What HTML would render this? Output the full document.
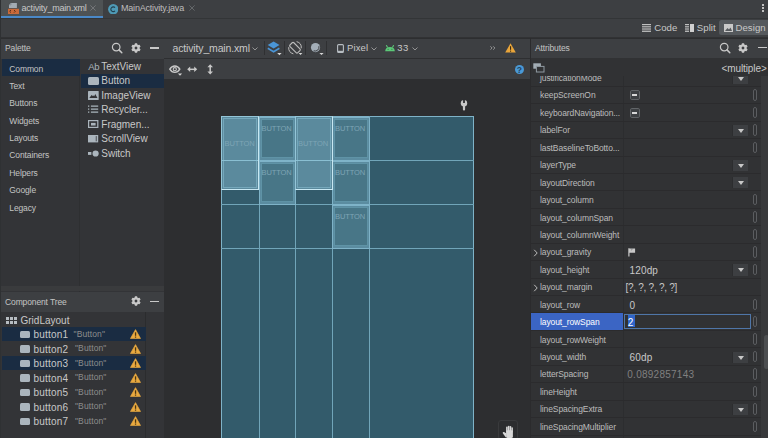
<!DOCTYPE html>
<html><head><meta charset="utf-8">
<style>
*{margin:0;padding:0;box-sizing:border-box}
html,body{width:768px;height:438px;overflow:hidden;background:#2d2e30;font-family:"Liberation Sans",sans-serif;color:#bbbbbb}
.a{position:absolute}
.t{position:absolute;white-space:nowrap;line-height:12px}
.cat{font-size:8.5px;color:#c4c4c4;letter-spacing:-0.12px}
.item{font-size:10px;color:#c8c8c8;letter-spacing:-0.02px}
.tr{font-size:10px;color:#c8c8c8;line-height:13px;letter-spacing:0.22px}
.trs{font-size:8.5px;color:#8d8d8d;line-height:11px;letter-spacing:0.1px}
.bi{position:absolute;width:10px;height:7.5px;border-radius:1.5px;background:#abb5bd}
.n{font-size:8.5px;line-height:17.44px;letter-spacing:-0.1px;padding-top:1.2px}
.v{font-size:10px;line-height:17.44px;color:#c8c8c8;letter-spacing:0.15px;padding-top:1px}
.arr{font-size:13px;line-height:16px;color:#bbbbbb}
.sep{left:0;width:231px;height:1px;background:#2b2b2d}
.dd{position:absolute;left:201.2px;width:16.6px;height:11.2px;background:#3d3f42;border-left:1px solid #2c2d2f}
.dd i{position:absolute;left:5px;top:4px;width:0;height:0;border-left:3px solid transparent;border-right:3px solid transparent;border-top:4px solid #c8c8c8}
.pk{position:absolute;left:222.5px;width:3.7px;height:11.5px;border:1px solid #5b5d60;border-radius:2px}
.cb{position:absolute;left:99px;width:10px;height:10px;border:1px solid #626568;border-radius:1.8px;background:#3d4043}
.cb i{position:absolute;left:1.2px;top:3.1px;width:5.6px;height:1.9px;background:#d8d8d8}
.hdr{font-size:8.5px;color:#c4c4c4;line-height:12px;letter-spacing:-0.12px}
.bp{position:absolute}
.btxt{position:absolute;font-size:7.5px;color:#7ea5b5;white-space:nowrap;letter-spacing:-0.1px}
</style></head><body>
<!-- tab bar -->
<div class="a" style="left:0;top:0;width:768px;height:18px;background:#3d3f42"></div>
<div class="a" style="left:0;top:0;width:102.5px;height:18px;background:#4e5254"></div>
<div class="a" style="left:1px;top:16px;width:101.5px;height:2px;background:#4a88c7"></div>
<div class="a" style="left:0;top:18px;width:768px;height:0.8px;background:#333537"></div>
<!-- tab icons -->
<svg class="a" style="left:8px;top:2.8px" width="11" height="11" viewBox="0 0 11 11"><path d="M2.8 0.1h6.1v5h-7.9v-3.2z" fill="#a3acb4"/><path d="M1.4 1.9h1.6v-1.6" stroke="#6a7077" stroke-width="0.5" fill="none"/><rect x="0" y="5.8" width="11" height="5.2" fill="#c96a3a"/><path d="M3 7l-1.3 1.3 1.3 1.3M6 7l1.3 1.3-1.3 1.3" stroke="#4a2a18" stroke-width="0.9" fill="none"/></svg>
<div class="t" style="left:21.5px;top:2.3px;font-size:9px;color:#c8c8c8;letter-spacing:-0.2px">activity_main.xml</div>
<svg class="a" style="left:90px;top:5px" width="6" height="6" viewBox="0 0 6 6"><path d="M0.4 0.4l5.2 5.2M5.6 0.4l-5.2 5.2" stroke="#7d8083" stroke-width="0.8"/></svg>
<svg class="a" style="left:107.8px;top:3.6px" width="10.5" height="10.5" viewBox="0 0 10.5 10.5"><circle cx="5.25" cy="5.25" r="5.15" fill="#4e9ab6"/><path d="M7 3.6a2.4 2.4 0 1 0 0 3.3" stroke="#22404e" stroke-width="1.1" fill="none"/></svg>
<div class="t" style="left:121px;top:2.3px;font-size:9px;color:#bdbdbd;letter-spacing:-0.2px">MainActivity.java</div>
<svg class="a" style="left:189px;top:5.2px" width="6" height="6" viewBox="0 0 6 6"><path d="M0.4 0.4l5.2 5.2M5.6 0.4l-5.2 5.2" stroke="#6f7275" stroke-width="0.8"/></svg>
<!-- kebab -->
<div class="a" style="left:762.3px;top:4.2px;width:1.9px;height:1.8px;background:#c0c0c0"></div>
<div class="a" style="left:762.3px;top:7.2px;width:1.9px;height:1.8px;background:#c0c0c0"></div>
<div class="a" style="left:762.3px;top:10.2px;width:1.9px;height:1.8px;background:#c0c0c0"></div>

<div class="a" style="left:0;top:0;width:1.4px;height:438px;background:#2f3133;z-index:5"></div>
<!-- row2 -->
<div class="a" style="left:0;top:19px;width:768px;height:18.5px;background:#3d3f42"></div>
<div class="a" style="left:0;top:37.2px;width:768px;height:0.9px;background:#313234"></div>
<svg class="a" style="left:642px;top:24px" width="9" height="8" viewBox="0 0 9 8"><path d="M0 0.5h9M0 2.3h9M0 4.1h9M0 5.9h9M0 7.6h9" stroke="#c0c0c0" stroke-width="1"/></svg>
<div class="t" style="left:654.2px;top:22px;font-size:9.6px;color:#c8c8c8;letter-spacing:0.05px">Code</div>
<svg class="a" style="left:685px;top:24px" width="9" height="8" viewBox="0 0 9 8"><path d="M0 0.5h4M0 2.3h4M0 4.1h4M0 5.9h4M0 7.6h4" stroke="#c0c0c0" stroke-width="1"/><rect x="5" y="0" width="4" height="8" fill="#d0d0d0"/></svg>
<div class="t" style="left:696.8px;top:22px;font-size:9.6px;color:#c8c8c8;letter-spacing:0.05px">Split</div>
<div class="a" style="left:719px;top:19.6px;width:52px;height:15.5px;border-radius:2.5px;background:#55595d"></div>
<svg class="a" style="left:723.5px;top:23.5px" width="9" height="8" viewBox="0 0 9 8"><rect x="0" y="0" width="9" height="8" fill="#c8c8c8"/><path d="M1 7l2.5-3 1.5 1.5 1.5-2 1.5 3.5z" fill="#55595d"/></svg>
<div class="t" style="left:735.5px;top:22px;font-size:9.6px;color:#c8c8c8;letter-spacing:0.05px">Design</div>

<!-- left panel -->
<div class="a" style="left:0;top:38.5px;width:164px;height:20.5px;background:#3d3f42"></div>
<div class="t hdr" style="left:5px;top:42px">Palette</div>
<svg class="a" style="left:111px;top:42px" width="12" height="12" viewBox="0 0 12 12"><circle cx="5.2" cy="5.1" r="3.8" stroke="#c8c8c8" stroke-width="1.2" fill="none"/><path d="M8 7.9l2.8 2.8" stroke="#c8c8c8" stroke-width="1.5" stroke-linecap="round"/></svg>
<svg class="a" style="left:130.6px;top:42.9px" width="10" height="10" viewBox="0 0 10 10"><path d="M3.92 0.32 L6.08 0.32 L6.33 1.55 L7.33 2.12 L8.51 1.73 L9.59 3.60 L8.65 4.42 L8.65 5.58 L9.59 6.40 L8.51 8.27 L7.33 7.88 L6.33 8.45 L6.08 9.68 L3.92 9.68 L3.67 8.45 L2.67 7.88 L1.49 8.27 L0.41 6.40 L1.35 5.58 L1.35 4.42 L0.41 3.60 L1.49 1.73 L2.67 2.12 L3.67 1.55Z M5 3.6a1.4 1.4 0 1 0 0.001 0z" fill="#c8c8c8" fill-rule="evenodd"/></svg>
<div class="a" style="left:150.2px;top:47.2px;width:9px;height:1.5px;background:#c8c8c8"></div>
<div class="a" style="left:0;top:59px;width:164px;height:233px;background:#333437"></div>
<div class="a" style="left:78.8px;top:59px;width:0.6px;height:233px;background:#2e2f31"></div>
<div class="a" style="left:1.5px;top:58.8px;width:78.5px;height:17.2px;background:#1a2c42"></div>
<div class="a" style="left:81px;top:73.6px;width:83px;height:14.3px;background:#1a2c42"></div>
<div class="t cat" style="left:9.3px;top:62.60px">Common</div>
<div class="t cat" style="left:9.3px;top:79.97px">Text</div>
<div class="t cat" style="left:9.3px;top:97.34px">Buttons</div>
<div class="t cat" style="left:9.3px;top:114.71px">Widgets</div>
<div class="t cat" style="left:9.3px;top:132.08px">Layouts</div>
<div class="t cat" style="left:9.3px;top:149.45px">Containers</div>
<div class="t cat" style="left:9.3px;top:166.82px">Helpers</div>
<div class="t cat" style="left:9.3px;top:184.19px">Google</div>
<div class="t cat" style="left:9.3px;top:201.56px">Legacy</div>
<!-- palette item icons -->
<div class="t" style="left:88.2px;top:60.8px;font-size:9.5px;color:#abb5bd;letter-spacing:-0.2px">Ab</div>
<div class="a" style="left:88.3px;top:77.2px;width:10.7px;height:7.6px;border-radius:1.5px;background:#abb5bd"></div>
<svg class="a" style="left:88.3px;top:90.7px" width="11" height="9.2" viewBox="0 0 11 9.2"><rect x="0" y="0" width="10.7" height="9.1" rx="0.6" fill="#abb5bd"/><path d="M1.3 7h8.2l-1.3-2.2-0.9-1.8-1.1 2.2-0.6-0.8-0.8 0.6-1.2-1.1z" fill="#333437"/></svg>
<svg class="a" style="left:88.3px;top:105.3px" width="11" height="9" viewBox="0 0 11 9"><path d="M0 1.2h1.3M0 4.2h1.3M0 7.2h1.3M2.9 1.2h7.3M2.9 4.2h7.3M2.9 7.2h7.3" stroke="#abb5bd" stroke-width="1.3"/></svg>
<svg class="a" style="left:88.3px;top:120.3px" width="11" height="8" viewBox="0 0 11 8"><rect x="0.6" y="0.6" width="9.2" height="6.8" stroke="#abb5bd" stroke-width="1.2" fill="none"/><rect x="3" y="2.9" width="4.6" height="2.6" fill="#abb5bd"/></svg>
<svg class="a" style="left:88.3px;top:134.9px" width="11" height="8" viewBox="0 0 11 8"><rect x="0" y="0" width="10.2" height="7.4" fill="#abb5bd"/><rect x="7.8" y="1.1" width="0.8" height="5.2" fill="#333437"/></svg>
<svg class="a" style="left:88.3px;top:149.5px" width="11" height="7" viewBox="0 0 11 7"><rect x="0" y="2" width="3.4" height="2.9" fill="#abb5bd"/><circle cx="7.6" cy="3.5" r="3.1" fill="#abb5bd"/></svg>
<div class="t item" style="left:101.3px;top:60.90px">TextView</div>
<div class="t item" style="left:101.3px;top:75.35px">Button</div>
<div class="t item" style="left:101.3px;top:89.80px">ImageView</div>
<div class="t item" style="left:101.3px;top:104.25px">Recycler...</div>
<div class="t item" style="left:101.3px;top:118.70px">Fragmen...</div>
<div class="t item" style="left:101.3px;top:133.15px">ScrollView</div>
<div class="t item" style="left:101.3px;top:147.60px">Switch</div>
<div class="a" style="left:0;top:285.5px;width:164px;height:5px;background:#3a3b3d"></div>

<!-- component tree -->
<div class="a" style="left:0;top:291.5px;width:164px;height:20.5px;background:#3d3f42"></div>
<div class="t hdr" style="left:5px;top:295.5px">Component Tree</div>
<svg class="a" style="left:130.5px;top:296.3px" width="10" height="10" viewBox="0 0 10 10"><path d="M3.92 0.32 L6.08 0.32 L6.33 1.55 L7.33 2.12 L8.51 1.73 L9.59 3.60 L8.65 4.42 L8.65 5.58 L9.59 6.40 L8.51 8.27 L7.33 7.88 L6.33 8.45 L6.08 9.68 L3.92 9.68 L3.67 8.45 L2.67 7.88 L1.49 8.27 L0.41 6.40 L1.35 5.58 L1.35 4.42 L0.41 3.60 L1.49 1.73 L2.67 2.12 L3.67 1.55Z M5 3.6a1.4 1.4 0 1 0 0.001 0z" fill="#c8c8c8" fill-rule="evenodd"/></svg>
<div class="a" style="left:150px;top:300.6px;width:9px;height:1.5px;background:#c8c8c8"></div>
<div class="a" style="left:0;top:312px;width:164px;height:126px;background:#333437"></div>
<div class="a" style="left:145px;top:312px;width:0.7px;height:126px;background:#2b2c2e"></div>
<div class="a" style="left:1.5px;top:326.8px;width:144px;height:14px;background:#1a2c42"></div>
<div class="a" style="left:1.5px;top:355.8px;width:144px;height:14px;background:#1a2c42"></div>
<svg class="a" style="left:6.3px;top:316.8px" width="11" height="7" viewBox="0 0 11 7"><path d="M0 0h3v3h-3zM4 0h3v3h-3zM8 0h3v3h-3zM0 4h3v3h-3zM4 4h3v3h-3zM8 4h3v3h-3z" fill="#b7bdc2"/></svg>
<div class="t tr" style="left:20.5px;top:313.5px;letter-spacing:0">GridLayout</div>
<div class="bi" style="left:19.5px;top:330.70px"></div>
<div class="t tr" style="left:33.5px;top:328.30px">button1</div>
<div class="t trs" style="left:73.6px;top:328.80px">"Button"</div>
<svg class="a" style="left:130px;top:329.30px" width="11" height="10" viewBox="0 0 11 10"><path d="M5.5 0.6 L10.6 9.5 H0.4 Z" fill="#e9a93f" stroke="#e9a93f" stroke-width="0.6" stroke-linejoin="round"/><rect x="4.9" y="3.3" width="1.3" height="3.5" fill="#4a3510"/><rect x="4.9" y="7.5" width="1.3" height="1.2" fill="#4a3510"/></svg>
<div class="bi" style="left:19.5px;top:345.20px"></div>
<div class="t tr" style="left:33.5px;top:342.80px">button2</div>
<div class="t trs" style="left:75px;top:343.30px">"Button"</div>
<svg class="a" style="left:130px;top:343.80px" width="11" height="10" viewBox="0 0 11 10"><path d="M5.5 0.6 L10.6 9.5 H0.4 Z" fill="#e9a93f" stroke="#e9a93f" stroke-width="0.6" stroke-linejoin="round"/><rect x="4.9" y="3.3" width="1.3" height="3.5" fill="#4a3510"/><rect x="4.9" y="7.5" width="1.3" height="1.2" fill="#4a3510"/></svg>
<div class="bi" style="left:19.5px;top:359.70px"></div>
<div class="t tr" style="left:33.5px;top:357.30px">button3</div>
<div class="t trs" style="left:75px;top:357.80px">"Button"</div>
<svg class="a" style="left:130px;top:358.30px" width="11" height="10" viewBox="0 0 11 10"><path d="M5.5 0.6 L10.6 9.5 H0.4 Z" fill="#e9a93f" stroke="#e9a93f" stroke-width="0.6" stroke-linejoin="round"/><rect x="4.9" y="3.3" width="1.3" height="3.5" fill="#4a3510"/><rect x="4.9" y="7.5" width="1.3" height="1.2" fill="#4a3510"/></svg>
<div class="bi" style="left:19.5px;top:374.20px"></div>
<div class="t tr" style="left:33.5px;top:371.80px">button4</div>
<div class="t trs" style="left:75px;top:372.30px">"Button"</div>
<svg class="a" style="left:130px;top:372.80px" width="11" height="10" viewBox="0 0 11 10"><path d="M5.5 0.6 L10.6 9.5 H0.4 Z" fill="#e9a93f" stroke="#e9a93f" stroke-width="0.6" stroke-linejoin="round"/><rect x="4.9" y="3.3" width="1.3" height="3.5" fill="#4a3510"/><rect x="4.9" y="7.5" width="1.3" height="1.2" fill="#4a3510"/></svg>
<div class="bi" style="left:19.5px;top:388.70px"></div>
<div class="t tr" style="left:33.5px;top:386.30px">button5</div>
<div class="t trs" style="left:75px;top:386.80px">"Button"</div>
<svg class="a" style="left:130px;top:387.30px" width="11" height="10" viewBox="0 0 11 10"><path d="M5.5 0.6 L10.6 9.5 H0.4 Z" fill="#e9a93f" stroke="#e9a93f" stroke-width="0.6" stroke-linejoin="round"/><rect x="4.9" y="3.3" width="1.3" height="3.5" fill="#4a3510"/><rect x="4.9" y="7.5" width="1.3" height="1.2" fill="#4a3510"/></svg>
<div class="bi" style="left:19.5px;top:403.20px"></div>
<div class="t tr" style="left:33.5px;top:400.80px">button6</div>
<div class="t trs" style="left:75px;top:401.30px">"Button"</div>
<svg class="a" style="left:130px;top:401.80px" width="11" height="10" viewBox="0 0 11 10"><path d="M5.5 0.6 L10.6 9.5 H0.4 Z" fill="#e9a93f" stroke="#e9a93f" stroke-width="0.6" stroke-linejoin="round"/><rect x="4.9" y="3.3" width="1.3" height="3.5" fill="#4a3510"/><rect x="4.9" y="7.5" width="1.3" height="1.2" fill="#4a3510"/></svg>
<div class="bi" style="left:19.5px;top:417.70px"></div>
<div class="t tr" style="left:33.5px;top:415.30px">button7</div>
<div class="t trs" style="left:75px;top:415.80px">"Button"</div>
<svg class="a" style="left:130px;top:416.30px" width="11" height="10" viewBox="0 0 11 10"><path d="M5.5 0.6 L10.6 9.5 H0.4 Z" fill="#e9a93f" stroke="#e9a93f" stroke-width="0.6" stroke-linejoin="round"/><rect x="4.9" y="3.3" width="1.3" height="3.5" fill="#4a3510"/><rect x="4.9" y="7.5" width="1.3" height="1.2" fill="#4a3510"/></svg>

<!-- design area -->
<div class="a" style="left:164px;top:38.5px;width:366px;height:19.7px;background:#3d3f42"></div>
<div class="a" style="left:164px;top:58.2px;width:366px;height:1px;background:#2e2f31"></div>
<div class="a" style="left:164px;top:59.2px;width:366px;height:19.8px;background:#3d3f42"></div>
<div class="a" style="left:530px;top:38px;width:1px;height:400px;background:#2b2b2d"></div>
<div class="t" style="left:172.5px;top:41.5px;font-size:10.5px;color:#c8c8c8;letter-spacing:-0.15px">activity_main.xml</div>
<svg class="a" style="left:252px;top:46.5px" width="6" height="4" viewBox="0 0 6 4"><path d="M0.5 0.5l2.5 2.5 2.5-2.5" stroke="#a0a0a0" stroke-width="0.9" fill="none"/></svg>
<div class="a" style="left:263.8px;top:41px;width:1px;height:14px;background:#2f3032"></div>
<div class="a" style="left:284.3px;top:41px;width:1px;height:14px;background:#2f3032"></div>
<div class="a" style="left:305.4px;top:41px;width:1px;height:14px;background:#2f3032"></div>
<div class="a" style="left:326.1px;top:41px;width:1px;height:14px;background:#2f3032"></div>
<svg class="a" style="left:267px;top:41px" width="16" height="15" viewBox="0 0 16 15"><path d="M6.6 0.6l5.9 3.5-5.9 3.5-5.9-3.5z" fill="#4a95d6"/><path d="M0.8 7.3l5.8 3.4 5.8-3.4" stroke="#4a95d6" stroke-width="1.6" fill="none"/><path d="M10.2 12h4.4l-2.2 2.2z" fill="#d8d8d8"/></svg>
<svg class="a" style="left:288px;top:41px" width="16" height="15" viewBox="0 0 16 15"><rect x="4.3" y="1.2" width="5.4" height="11" rx="1.2" transform="rotate(-45 7 6.7)" stroke="#bdbdbd" stroke-width="1.1" fill="none"/><path d="M8.63 0.61A6.3 6.3 0 0 1 13.28 7.25M5.37 12.79A6.3 6.3 0 0 1 0.72 6.15" stroke="#bdbdbd" stroke-width="1" fill="none"/><path d="M10.6 12h3.8l-1.9 2z" fill="#d8d8d8"/></svg>
<svg class="a" style="left:310px;top:41px" width="16" height="15" viewBox="0 0 16 15"><circle cx="5.5" cy="6.6" r="4.6" fill="#a3aeb8"/><path d="M8.9 5.2a3.9 3.9 0 0 1-5.2 4.6" stroke="#3d3f42" stroke-width="1" fill="none"/><path d="M9.4 12h4.2l-2.1 2.1z" fill="#d8d8d8"/></svg>
<svg class="a" style="left:336.5px;top:43.5px" width="7" height="9" viewBox="0 0 7 9"><rect x="0.6" y="0.6" width="5.8" height="7.8" rx="1" stroke="#b7bdc2" stroke-width="1.1" fill="none"/><rect x="1" y="6.8" width="5" height="1.6" fill="#b7bdc2"/></svg>
<div class="t" style="left:347px;top:42.3px;font-size:9.5px;color:#c8c8c8;letter-spacing:0.12px">Pixel</div>
<svg class="a" style="left:371px;top:46.5px" width="6" height="4" viewBox="0 0 6 4"><path d="M0.5 0.5l2.5 2.5 2.5-2.5" stroke="#a0a0a0" stroke-width="0.9" fill="none"/></svg>
<svg class="a" style="left:384.8px;top:44.8px" width="10" height="7" viewBox="0 0 10 7"><path d="M0.2 6.2c0-2.6 1.9-4.2 4.8-4.2s4.8 1.6 4.8 4.2z" fill="#5cc878"/><path d="M1.3 0.2l1.3 2.3M8.7 0.2l-1.3 2.3" stroke="#5cc878" stroke-width="1.1"/><circle cx="3.1" cy="4.3" r="0.55" fill="#2d5a3a"/><circle cx="6.9" cy="4.3" r="0.55" fill="#2d5a3a"/></svg>
<div class="t" style="left:397.3px;top:42.3px;font-size:9.5px;color:#c8c8c8;letter-spacing:0.3px">33</div>
<svg class="a" style="left:412px;top:46.5px" width="6" height="4" viewBox="0 0 6 4"><path d="M0.5 0.5l2.5 2.5 2.5-2.5" stroke="#a0a0a0" stroke-width="0.9" fill="none"/></svg>
<svg class="a" style="left:490.3px;top:45.8px" width="6" height="4" viewBox="0 0 6 4"><path d="M0.4 0.3l1.7 1.7-1.7 1.7M3.2 0.3l1.7 1.7-1.7 1.7" stroke="#a8a8a8" stroke-width="0.8" fill="none"/></svg>
<svg class="a" style="left:505px;top:43px" width="11" height="10" viewBox="0 0 11 10"><path d="M5.5 0.3 L10.8 9.6 H0.2 Z" fill="#e9a53a"/><rect x="5" y="3.2" width="1.1" height="3.6" fill="#3a2a10"/><rect x="5" y="7.6" width="1.1" height="1.1" fill="#3a2a10"/></svg>
<svg class="a" style="left:169px;top:65px" width="14" height="12" viewBox="0 0 14 12"><path d="M0.8 4.2c2.4-4.2 7.6-4.2 10 0-2.4 4.2-7.6 4.2-10 0z" stroke="#c8c8c8" stroke-width="1.4" fill="none"/><circle cx="5.8" cy="4.2" r="1.6" stroke="#c8c8c8" stroke-width="1.1" fill="none"/><path d="M8.9 8.6h4.2l-2.1 2.2z" fill="#d8d8d8"/></svg>
<svg class="a" style="left:186.5px;top:66px" width="11" height="7" viewBox="0 0 11 7"><path d="M2.5 3.3h6" stroke="#c8c8c8" stroke-width="1.5"/><path d="M0.2 3.3l3-2.8v5.6zM10.2 3.3l-3-2.8v5.6z" fill="#c8c8c8"/></svg>
<svg class="a" style="left:207.3px;top:63.5px" width="7" height="11" viewBox="0 0 7 11"><path d="M3.2 2.5v6" stroke="#c8c8c8" stroke-width="1.5"/><path d="M3.2 0.2l-2.8 3h5.6zM3.2 10.6l-2.8-3h5.6z" fill="#c8c8c8"/></svg>
<div class="a" style="left:514.5px;top:64.5px;width:9.5px;height:9.5px;border-radius:50%;background:#4a99d6"></div>
<div class="t" style="left:516.7px;top:63.5px;font-size:8.5px;font-weight:bold;color:#23435e">?</div>

<!-- blueprint -->
<div class="bp" style="left:221px;top:116px;width:253px;height:330px;background:#335b6b;border:1px solid #7fb3c8"></div>
<!-- grid lines -->
<div class="bp" style="left:258.5px;top:116px;width:1px;height:322px;background:#71a5b9"></div>
<div class="bp" style="left:295px;top:116px;width:1px;height:322px;background:#71a5b9"></div>
<div class="bp" style="left:332px;top:116px;width:1px;height:322px;background:#71a5b9"></div>
<div class="bp" style="left:369.3px;top:116px;width:1px;height:322px;background:#71a5b9"></div>
<div class="bp" style="left:221px;top:160px;width:253px;height:1px;background:#71a5b9"></div>
<div class="bp" style="left:221px;top:204px;width:253px;height:1px;background:#71a5b9"></div>
<div class="bp" style="left:221px;top:248px;width:253px;height:1px;background:#71a5b9"></div>
<!-- unselected buttons -->
<div class="bp" style="left:259px;top:116.5px;width:36.5px;height:44px;background:#5b8ca0;border:1px solid #7fb3c8"><div class="a" style="left:1px;top:1.5px;width:32.5px;height:39px;background:#487687;border:1px solid #5f93a6"></div></div>
<div class="btxt" style="left:261.5px;top:124.1px">BUTTON</div>
<div class="bp" style="left:259px;top:160.5px;width:36.5px;height:44px;background:#5b8ca0;border:1px solid #7fb3c8"><div class="a" style="left:1px;top:1.5px;width:32.5px;height:39px;background:#487687;border:1px solid #5f93a6"></div></div>
<div class="btxt" style="left:261.5px;top:168.1px">BUTTON</div>
<div class="bp" style="left:332.3px;top:116.5px;width:37.5px;height:44px;background:#5b8ca0;border:1px solid #7fb3c8"><div class="a" style="left:1px;top:1.5px;width:33.5px;height:39px;background:#487687;border:1px solid #5f93a6"></div></div>
<div class="btxt" style="left:335px;top:124.1px">BUTTON</div>
<div class="bp" style="left:332.3px;top:160.5px;width:37.5px;height:44px;background:#5b8ca0;border:1px solid #7fb3c8"><div class="a" style="left:1px;top:1.5px;width:33.5px;height:39px;background:#487687;border:1px solid #5f93a6"></div></div>
<div class="btxt" style="left:335px;top:168.1px">BUTTON</div>
<div class="bp" style="left:332.3px;top:204.5px;width:37.5px;height:44px;background:#5b8ca0;border:1px solid #7fb3c8"><div class="a" style="left:1px;top:1.5px;width:33.5px;height:39px;background:#487687;border:1px solid #5f93a6"></div></div>
<div class="btxt" style="left:335px;top:212.1px">BUTTON</div>
<!-- selected buttons -->
<div class="bp" style="left:221px;top:116px;width:38px;height:74px;background:#5b8a9d;border:1px solid #94c6d8;border-right-color:#c8e8f2;border-bottom-color:#c8e8f2"><div class="a" style="left:1px;top:1px;width:34px;height:70px;border:1px solid #74a7ba"></div></div>
<div class="bp" style="left:222px;top:160px;width:36px;height:1px;background:#8abfd2"></div>
<div class="btxt" style="left:224.5px;top:138.6px">BUTTON</div>
<div class="bp" style="left:295px;top:116px;width:37.5px;height:74px;background:#5b8a9d;border:1px solid #94c6d8;border-right-color:#c8e8f2;border-bottom-color:#c8e8f2"><div class="a" style="left:1px;top:1px;width:33.5px;height:70px;border:1px solid #74a7ba"></div></div>
<div class="bp" style="left:296px;top:160px;width:35.5px;height:1px;background:#8abfd2"></div>
<div class="btxt" style="left:298px;top:138.6px">BUTTON</div>
<!-- wrench -->
<svg class="a" style="left:460px;top:99.3px" width="8" height="12" viewBox="0 0 8 12"><circle cx="4" cy="4.2" r="3.2" fill="#c8c8c8"/><rect x="3.1" y="0.4" width="1.8" height="3.6" fill="#2d2e30"/><rect x="2.9" y="5" width="2.2" height="6.4" rx="1" fill="#c8c8c8"/></svg>
<!-- hand button -->
<div class="a" style="left:498.2px;top:420.3px;width:19.8px;height:20px;border-radius:3px;background:#2c2d2f;border:1px solid #393a3c"></div>
<svg class="a" style="left:502px;top:425px" width="12" height="13" viewBox="0 0 12 13"><rect x="4.1" y="1.6" width="1.6" height="6" rx="0.8" fill="#d8d8d8"/><rect x="5.9" y="0.8" width="1.6" height="6.5" rx="0.8" fill="#d8d8d8"/><rect x="7.7" y="1.1" width="1.6" height="6.2" rx="0.8" fill="#d8d8d8"/><rect x="9.4" y="2.2" width="1.5" height="5.2" rx="0.75" fill="#d8d8d8"/><rect x="4.1" y="5.2" width="6.8" height="7.8" rx="1.6" fill="#d8d8d8"/><path d="M4.6 8.6L2 7a0.9 0.9 0 0 0-1.2 1.2L3.8 12.4z" fill="#d8d8d8"/></svg>

<!-- attributes -->
<div class="a" style="left:530.5px;top:38.5px;width:237.5px;height:19.5px;background:#3d3f42"></div>
<div class="a" style="left:530.5px;top:58px;width:237.5px;height:18px;background:#313234"></div>
<div class="t hdr" style="left:535px;top:42px">Attributes</div>
<svg class="a" style="left:718.8px;top:42.3px" width="12" height="12" viewBox="0 0 12 12"><circle cx="5.2" cy="5.1" r="3.8" stroke="#c8c8c8" stroke-width="1.2" fill="none"/><path d="M8 7.9l2.8 2.8" stroke="#c8c8c8" stroke-width="1.5" stroke-linecap="round"/></svg>
<svg class="a" style="left:738px;top:42.5px" width="10" height="10" viewBox="0 0 10 10"><path d="M3.92 0.32 L6.08 0.32 L6.33 1.55 L7.33 2.12 L8.51 1.73 L9.59 3.60 L8.65 4.42 L8.65 5.58 L9.59 6.40 L8.51 8.27 L7.33 7.88 L6.33 8.45 L6.08 9.68 L3.92 9.68 L3.67 8.45 L2.67 7.88 L1.49 8.27 L0.41 6.40 L1.35 5.58 L1.35 4.42 L0.41 3.60 L1.49 1.73 L2.67 2.12 L3.67 1.55Z M5 3.6a1.4 1.4 0 1 0 0.001 0z" fill="#c8c8c8" fill-rule="evenodd"/></svg>
<div class="a" style="left:758px;top:46.8px;width:9px;height:1.5px;background:#c8c8c8"></div>
<svg class="a" style="left:533px;top:62.8px" width="12" height="10" viewBox="0 0 12 10"><rect x="0.3" y="0.3" width="7.6" height="5.4" fill="#a3adb5"/><rect x="3.4" y="3.4" width="7.6" height="5.6" stroke="#8f99a1" stroke-width="1" fill="#313234"/></svg>
<div class="t" style="left:721.5px;top:62.5px;font-size:10px;color:#c8c8c8;letter-spacing:-0.1px">&lt;multiple&gt;</div>
<div class="a" style="left:530.5px;top:76px;width:230.5px;height:362px;overflow:hidden;background:#313234">
<div class="a" style="left:92.4px;top:0;width:1px;height:363px;background:#2c2d2f"></div>
<div class="a" style="left:-530.5px;top:-76px;width:768px;height:438px">
<div class="a" style="left:530.5px;top:0;width:231px;height:438px">
<div class="t n" style="left:9.5px;top:68.81px;color:#bcbcbc">justificationMode</div>
<div class="a sep" style="top:85.75px"></div>
<div class="dd" style="top:72.63px"><i></i></div>
<div class="t n" style="left:9.5px;top:86.25px;color:#bcbcbc">keepScreenOn</div>
<div class="a sep" style="top:103.19px"></div>
<div class="cb" style="top:90.22px"><i></i></div>
<div class="pk" style="top:89.22px"></div>
<div class="t n" style="left:9.5px;top:103.69px;color:#bcbcbc">keyboardNavigation...</div>
<div class="a sep" style="top:120.63px"></div>
<div class="cb" style="top:107.66px"><i></i></div>
<div class="pk" style="top:106.66px"></div>
<div class="t n" style="left:9.5px;top:121.13px;color:#bcbcbc">labelFor</div>
<div class="a sep" style="top:138.07px"></div>
<div class="dd" style="top:124.95px"><i></i></div>
<div class="pk" style="top:124.10px"></div>
<div class="t n" style="left:9.5px;top:138.57px;color:#bcbcbc">lastBaselineToBotto...</div>
<div class="a sep" style="top:155.51px"></div>
<div class="pk" style="top:141.54px"></div>
<div class="t n" style="left:9.5px;top:156.01px;color:#bcbcbc">layerType</div>
<div class="a sep" style="top:172.95px"></div>
<div class="dd" style="top:159.83px"><i></i></div>
<div class="t n" style="left:9.5px;top:173.45px;color:#bcbcbc">layoutDirection</div>
<div class="a sep" style="top:190.39px"></div>
<div class="dd" style="top:177.27px"><i></i></div>
<div class="t n" style="left:9.5px;top:190.89px;color:#bcbcbc">layout_column</div>
<div class="a sep" style="top:207.83px"></div>
<div class="pk" style="top:193.86px"></div>
<div class="t n" style="left:9.5px;top:208.33px;color:#bcbcbc">layout_columnSpan</div>
<div class="a sep" style="top:225.27px"></div>
<div class="pk" style="top:211.30px"></div>
<div class="t n" style="left:9.5px;top:225.77px;color:#bcbcbc">layout_columnWeight</div>
<div class="a sep" style="top:242.71px"></div>
<div class="pk" style="top:228.74px"></div>
<div class="t n" style="left:9.5px;top:243.21px;color:#bcbcbc">layout_gravity</div>
<div class="a sep" style="top:260.15px"></div>
<svg class="a" style="left:2px;top:248.71px" width="6" height="8" viewBox="0 0 6 8"><path d="M1.2 0.8l3 3.2-3 3.2" stroke="#bdbdbd" stroke-width="1" fill="none"/></svg>
<svg class="a" style="left:97.3px;top:247.81px" width="8" height="9" viewBox="0 0 8 9"><path d="M0.3 0.3h1.2v8.2h-1.2z M1.5 0.6h5.6v4.2h-5.6z" fill="#c8c8c8"/><path d="M4 0.6v1.4h-1.2" stroke="#313234" stroke-width="0.3" fill="none"/></svg>
<div class="pk" style="top:246.18px"></div>
<div class="t n" style="left:9.5px;top:260.65px;color:#bcbcbc">layout_height</div>
<div class="a sep" style="top:277.59px"></div>
<div class="t v" style="left:99px;top:260.65px">120dp</div>
<div class="dd" style="top:264.47px"><i></i></div>
<div class="pk" style="top:263.62px"></div>
<div class="t n" style="left:9.5px;top:278.09px;color:#bcbcbc">layout_margin</div>
<div class="a sep" style="top:295.03px"></div>
<svg class="a" style="left:2px;top:283.59px" width="6" height="8" viewBox="0 0 6 8"><path d="M1.2 0.8l3 3.2-3 3.2" stroke="#bdbdbd" stroke-width="1" fill="none"/></svg>
<div class="t v" style="left:95px;top:278.09px;letter-spacing:-0.27px">[?, ?, ?, ?, ?]</div>
<div class="t n" style="left:9.5px;top:295.53px;color:#bcbcbc">layout_row</div>
<div class="a sep" style="top:312.47px"></div>
<div class="t v" style="left:99px;top:295.53px">0</div>
<div class="pk" style="top:298.50px"></div>
<div class="a" style="left:0px;top:313.47px;width:92.6px;height:16.94px;background:#3b65c4"></div>
<div class="a" style="left:93.5px;top:313.97px;width:127px;height:15.5px;border:1px solid #4f76a8;background:#313234"></div>
<div class="a" style="left:97px;top:315.47px;width:7px;height:11.5px;background:#2f65ca"></div>
<div class="t v" style="left:97.3px;top:312.97px;color:#ffffff">2</div>
<div class="t n" style="left:9.5px;top:312.97px;color:#ffffff">layout_rowSpan</div>
<div class="a sep" style="top:329.91px"></div>
<div class="pk" style="top:315.94px"></div>
<div class="t n" style="left:9.5px;top:330.41px;color:#bcbcbc">layout_rowWeight</div>
<div class="a sep" style="top:347.35px"></div>
<div class="pk" style="top:333.38px"></div>
<div class="t n" style="left:9.5px;top:347.85px;color:#bcbcbc">layout_width</div>
<div class="a sep" style="top:364.79px"></div>
<div class="t v" style="left:99px;top:347.85px">60dp</div>
<div class="dd" style="top:351.67px"><i></i></div>
<div class="pk" style="top:350.82px"></div>
<div class="t n" style="left:9.5px;top:365.29px;color:#bcbcbc">letterSpacing</div>
<div class="a sep" style="top:382.23px"></div>
<div class="t v" style="left:96.8px;top:365.29px;color:#808080;letter-spacing:0.25px">0.0892857143</div>
<div class="pk" style="top:368.26px"></div>
<div class="t n" style="left:9.5px;top:382.73px;color:#bcbcbc">lineHeight</div>
<div class="a sep" style="top:399.67px"></div>
<div class="pk" style="top:385.70px"></div>
<div class="t n" style="left:9.5px;top:400.17px;color:#bcbcbc">lineSpacingExtra</div>
<div class="a sep" style="top:417.11px"></div>
<div class="dd" style="top:403.99px"><i></i></div>
<div class="pk" style="top:403.14px"></div>
<div class="t n" style="left:9.5px;top:417.61px;color:#bcbcbc">lineSpacingMultiplier</div>
<div class="a sep" style="top:434.55px"></div>
<div class="pk" style="top:420.58px"></div>
</div>
</div>
</div>
<div class="a" style="left:760.8px;top:76px;width:7.2px;height:362px;background:#38393b"></div>
<div class="a" style="left:764.2px;top:335px;width:5px;height:33.5px;border-radius:2.5px;background:#4c4e50"></div>
</body></html>
